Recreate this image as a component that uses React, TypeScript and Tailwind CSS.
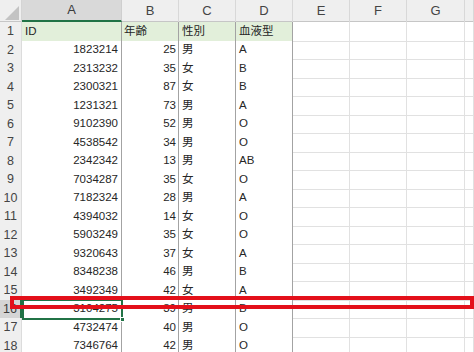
import React from "react";

type Row = [string, string, string, string];

const rows: Row[] = [
  ["ID", "年齢", "性別", "血液型"],
  ["1823214", "25", "男", "A"],
  ["2313232", "35", "女", "B"],
  ["2300321", "87", "女", "B"],
  ["1231321", "73", "男", "A"],
  ["9102390", "52", "男", "O"],
  ["4538542", "34", "男", "O"],
  ["2342342", "13", "男", "AB"],
  ["7034287", "35", "女", "O"],
  ["7182324", "28", "男", "A"],
  ["4394032", "14", "女", "O"],
  ["5903249", "35", "女", "O"],
  ["9320643", "37", "女", "A"],
  ["8348238", "46", "男", "B"],
  ["3492349", "42", "女", "A"],
  ["3104275", "39", "男", "B"],
  ["4732474", "40", "男", "O"],
  ["7346764", "42", "男", "O"],
];

const cols = ["A", "B", "C", "D", "E", "F", "G", ""];
const grid = "grid grid-cols-[22px_100px_57px_57px_57px_57px_57px_58px_1fr]";

const App: React.FC = () => {
  return (
    <div
      className="relative w-[474px] h-[352px] overflow-hidden bg-white text-[#262626]"
      style={{ fontFamily: '"Liberation Sans", "Noto Sans CJK JP", sans-serif' }}
    >
      {/* Column headers */}
      <div className={`${grid} h-[22px] bg-[#efefef] border-b border-[#c6c6c6]`}>
        <div className="relative border-r border-[#d4d4d4]">
          <div className="absolute right-[2px] bottom-[2px] w-0 h-0 border-l-[14px] border-l-transparent border-b-[14px] border-b-[#c3c3c3]" />
        </div>
        {cols.map((c, i) => (
          <div
            key={i}
            className={
              i === 0
                ? "flex items-center justify-center text-[13px] text-[#3b3b3b] bg-[#d9d9d9] border-r border-[#cfcfcf] border-b-2 border-b-[#217346]"
                : "flex items-center justify-center text-[13px] text-[#444] border-r border-[#d8d8d8]"
            }
          >
            {c}
          </div>
        ))}
      </div>

      {/* Body rows */}
      {rows.map((r, ri) => {
        const n = ri + 1;
        const hdr = n === 1;
        const sel = n === 16;
        const fill = hdr ? "bg-[#e2efda]" : "bg-white";
        return (
          <div key={ri} className={`${grid} h-[18.5px]`}>
            <div
              className={
                sel
                  ? "flex items-center justify-center text-[12.5px] text-[#3a3a3a] bg-[#d5d5d5] border-r-2 border-r-[#217346] border-b border-[#d0d0d0]"
                  : "flex items-center justify-center text-[12.5px] text-[#444] bg-[#efefef] border-r border-[#c6c6c6] border-b border-[#dcdcdc]"
              }
            >
              {n}
            </div>
            <div
              className={`flex items-center text-[11.5px] px-[3px] border-r border-b border-[#a3a3a3] ${fill} ${
                hdr ? "justify-start" : "justify-end"
              }`}
            >
              {r[0]}
            </div>
            <div
              className={`flex items-center text-[11.5px] px-[2px] border-r border-b border-[#a3a3a3] ${fill} ${
                hdr ? "justify-start" : "justify-end"
              }`}
            >
              {r[1]}
            </div>
            <div className={`flex items-center text-[11.5px] px-[3px] border-r border-b border-[#a3a3a3] ${fill}`}>
              {r[2]}
            </div>
            <div className={`flex items-center text-[11.5px] px-[3px] border-r border-b border-[#a3a3a3] ${fill}`}>
              {r[3]}
            </div>
            <div className="border-r border-b border-[#e1e1e1]" />
            <div className="border-r border-b border-[#e1e1e1]" />
            <div className="border-r border-b border-[#e1e1e1]" />
            <div className="border-r border-b border-[#e1e1e1]" />
            <div className="border-b border-[#e1e1e1]" />
          </div>
        );
      })}

      {/* Active cell A16 */}
      <div className="absolute left-[22px] top-[299px] w-[101px] h-[21px] border-2 border-[#217346]">
        <div className="absolute -right-[4px] -bottom-[4px] w-[5px] h-[5px] bg-[#217346] border border-white" />
      </div>

      {/* Red highlight */}
      <div className="absolute left-[10px] top-[296px] w-[464px] h-[13px] border-[4px] border-[#e3101a]" />
    </div>
  );
};

export default App;
